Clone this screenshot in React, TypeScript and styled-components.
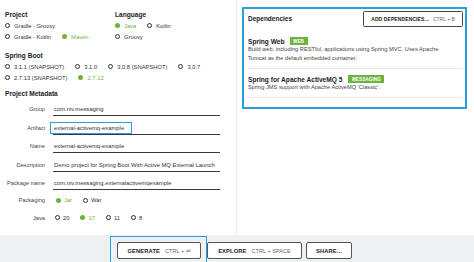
import React from "react";
import styled, { createGlobalStyle } from "styled-components";

const GREEN = "#6db33f";
const BLUE = "#2a9fd8";

const Global = createGlobalStyle`
  html, body { margin: 0; padding: 0; background: #fff; }
  body { font-family: "Liberation Sans", Arial, sans-serif; color: #222; }
  * { box-sizing: border-box; }
`;

const Page = styled.div`
  width: 474px;
  height: 262px;
  overflow: hidden;
  display: flex;
  flex-direction: column;
  background: #fff;
`;

const Main = styled.div`
  display: flex;
  height: 235px;
`;

const Left = styled.div`
  width: 237px;
  border-right: 1px solid #ececec;
  padding: 10px 0 0 5px;
`;

const Right = styled.div`
  flex: 1;
  padding: 7px 7px 0 5px;
`;

const TopRow = styled.div`
  display: flex;
`;

const Section = styled.div<{ $w?: number; $mt?: number }>`
  width: ${(p) => (p.$w ? `${p.$w}px` : "auto")};
  margin-top: ${(p) => p.$mt ?? 0}px;
`;

const Title = styled.div`
  font-weight: 700;
  font-size: 6.6px;
  line-height: 10px;
  color: #222;
  white-space: nowrap;
`;

const RadioRow = styled.div<{ $h?: number; $ml?: number }>`
  display: flex;
  align-items: center;
  height: ${(p) => p.$h ?? 11}px;
  margin-left: ${(p) => p.$ml ?? 0}px;
`;

const RadioItem = styled.div<{ $on?: boolean }>`
  display: flex;
  align-items: center;
  margin-right: 11px;
  font-size: 5.8px;
  color: ${(p) => (p.$on ? GREEN : "#333")};
  white-space: nowrap;
`;

const Dot = styled.span<{ $on?: boolean; $gap?: number }>`
  width: 5px;
  height: 5px;
  border-radius: 50%;
  margin-right: ${(p) => p.$gap ?? 4}px;
  border: ${(p) => (p.$on ? "none" : "1px solid #333")};
  background: ${(p) => (p.$on ? GREEN : "#fff")};
  flex: none;
`;

const FieldRow = styled.div<{ $h?: number }>`
  display: flex;
  height: ${(p) => p.$h ?? 18.5}px;
`;

const FieldLabel = styled.div`
  width: 40px;
  margin-right: 8px;
  text-align: right;
  font-size: 5.7px;
  line-height: 6px;
  padding-top: 7px;
  color: #444;
  white-space: nowrap;
`;

const LabelCenter = styled(FieldLabel)`
  padding-top: 0;
  display: flex;
  align-items: center;
  justify-content: flex-end;
`;

const FieldValue = styled.div`
  position: relative;
  width: 167px;
  height: 17px;
  border-bottom: 1.5px solid #3a3a3a;
  padding: 7px 0 0 1px;
  font-size: 5.85px;
  line-height: 6px;
  color: #333;
  white-space: nowrap;
`;

const Highlight = styled.div`
  position: absolute;
  left: -3px;
  top: 4.5px;
  width: 82px;
  height: 12px;
  border: 1.5px solid ${BLUE};
`;

const DepsBox = styled.div`
  border: 2px solid ${BLUE};
  height: 102px;
  padding: 2px 2px 0 4px;
`;

const DepsHeader = styled.div`
  display: flex;
  align-items: center;
  justify-content: space-between;
  height: 16px;
`;

const HeadText = styled.div`
  font-weight: 700;
  font-size: 6.5px;
  color: #222;
  margin-top: -1px;
`;

const SmallButton = styled.div`
  width: 100px;
  height: 16px;
  border: 1px solid #444;
  border-radius: 1.5px;
  display: flex;
  align-items: center;
  justify-content: center;
  gap: 4px;
  font-size: 5px;
  background: #fff;
`;

const Strong = styled.span<{ $size?: number }>`
  font-weight: 700;
  color: #222;
  letter-spacing: 0.1px;
  font-size: ${(p) => p.$size ?? 5}px;
`;

const Key = styled.span<{ $size?: number }>`
  color: #666;
  font-size: ${(p) => p.$size ?? 5}px;
  font-family: "Liberation Sans", "DejaVu Sans", sans-serif;
`;

const DepItem = styled.div<{ $pt: number; $pb: number }>`
  padding: ${(p) => p.$pt}px 0 ${(p) => p.$pb}px 0;
  border-bottom: 1px solid #e8e8e8;
`;

const DepTitle = styled.div`
  display: flex;
  align-items: center;
  height: 8px;
  font-weight: 700;
  font-size: 6.6px;
  color: #222;
  white-space: nowrap;
`;

const Badge = styled.span<{ $ml?: number }>`
  margin-left: ${(p) => p.$ml ?? 5}px;
  background: ${GREEN};
  color: #fff;
  font-size: 4.6px;
  font-weight: 700;
  height: 8px;
  padding: 0 3.5px;
  display: inline-flex;
  align-items: center;
  letter-spacing: 0.1px;
`;

const DepDesc = styled.div`
  font-size: 5.7px;
  line-height: 8.5px;
  color: #444;
  white-space: nowrap;
`;

const Footer = styled.div`
  height: 27px;
  background: #eef0f1;
  display: flex;
  align-items: flex-start;
  padding: 7px 0 0 117px;
`;

const FootButton = styled.div<{ $w: number; $ml?: number }>`
  position: relative;
  width: ${(p) => p.$w}px;
  margin-left: ${(p) => p.$ml ?? 0}px;
  height: 17px;
  background: #fff;
  border: 1px solid #555;
  border-radius: 2px;
  display: flex;
  align-items: center;
  justify-content: center;
  gap: 5px;
`;

const FootHighlight = styled.div`
  position: absolute;
  left: -8px;
  top: -7px;
  right: -7px;
  bottom: -12px;
  border: 1.5px solid ${BLUE};
`;

type Opt = { label: string; on?: boolean };

const Radios = ({ opts, gap, h, ml }: { opts: Opt[]; gap?: number; h?: number; ml?: number }) => (
  <RadioRow $h={h} $ml={ml}>
    {opts.map((o) => (
      <RadioItem key={o.label} $on={o.on}>
        <Dot $on={o.on} $gap={gap} />
        {o.label}
      </RadioItem>
    ))}
  </RadioRow>
);

const fields: { label: string; value: string; hl?: boolean }[] = [
  { label: "Group", value: "com.niv.messaging" },
  { label: "Artifact", value: "external-activemq-example", hl: true },
  { label: "Name", value: "external-activemq-example" },
  { label: "Description", value: "Demo project for Spring Boot With Active MQ External Launch" },
  { label: "Package name", value: "com.niv.messaging.externalactivemqexample" },
];

export default function App() {
  return (
    <Page>
      <Global />
      <Main>
        <Left>
          <TopRow>
            <Section $w={110}>
              <Title>Project</Title>
              <Radios opts={[{ label: "Gradle - Groovy" }]} />
              <Radios opts={[{ label: "Gradle - Kotlin" }, { label: "Maven", on: true }]} />
            </Section>
            <Section>
              <Title>Language</Title>
              <Radios opts={[{ label: "Java", on: true }, { label: "Kotlin" }]} />
              <Radios opts={[{ label: "Groovy" }]} />
            </Section>
          </TopRow>
          <Section $mt={9}>
            <Title>Spring Boot</Title>
            <Radios
              opts={[
                { label: "3.1.1 (SNAPSHOT)" },
                { label: "3.1.0" },
                { label: "3.0.8 (SNAPSHOT)" },
                { label: "3.0.7" },
              ]}
            />
            <Radios opts={[{ label: "2.7.13 (SNAPSHOT)" }, { label: "2.7.12", on: true }]} />
          </Section>
          <Section $mt={6}>
            <Title>Project Metadata</Title>
            {fields.map((f) => (
              <FieldRow key={f.label}>
                <FieldLabel>{f.label}</FieldLabel>
                <FieldValue>
                  {f.value}
                  {f.hl && <Highlight />}
                </FieldValue>
              </FieldRow>
            ))}
            <FieldRow $h={17}>
              <LabelCenter>Packaging</LabelCenter>
              <Radios h={17} gap={3} ml={3} opts={[{ label: "Jar", on: true }, { label: "War" }]} />
            </FieldRow>
            <FieldRow $h={18}>
              <LabelCenter>Java</LabelCenter>
              <Radios
                h={18}
                gap={3}
                ml={2}
                opts={[{ label: "20" }, { label: "17", on: true }, { label: "11" }, { label: "8" }]}
              />
            </FieldRow>
          </Section>
        </Left>
        <Right>
          <DepsBox>
            <DepsHeader>
              <HeadText>Dependencies</HeadText>
              <SmallButton>
                <Strong>ADD DEPENDENCIES...</Strong>
                <Key>CTRL + B</Key>
              </SmallButton>
            </DepsHeader>
            <DepItem $pt={10} $pb={6}>
              <DepTitle>
                Spring Web<Badge>WEB</Badge>
              </DepTitle>
              <DepDesc>
                Build web, including RESTful, applications using Spring MVC. Uses Apache
                <br />
                Tomcat as the default embedded container.
              </DepDesc>
            </DepItem>
            <DepItem $pt={6} $pb={5.5}>
              <DepTitle>
                Spring for Apache ActiveMQ 5<Badge $ml={6}>MESSAGING</Badge>
              </DepTitle>
              <DepDesc>Spring JMS support with Apache ActiveMQ 'Classic'.</DepDesc>
            </DepItem>
          </DepsBox>
        </Right>
      </Main>
      <Footer>
        <FootButton $w={84}>
          <Strong $size={5.8}>GENERATE</Strong>
          <Key $size={5.6}>CTRL + ⏎</Key>
          <FootHighlight />
        </FootButton>
        <FootButton $w={95} $ml={6}>
          <Strong $size={5.8}>EXPLORE</Strong>
          <Key $size={5.6}>CTRL + SPACE</Key>
        </FootButton>
        <FootButton $w={46} $ml={4}>
          <Strong $size={5.8}>SHARE...</Strong>
        </FootButton>
      </Footer>
    </Page>
  );
}
